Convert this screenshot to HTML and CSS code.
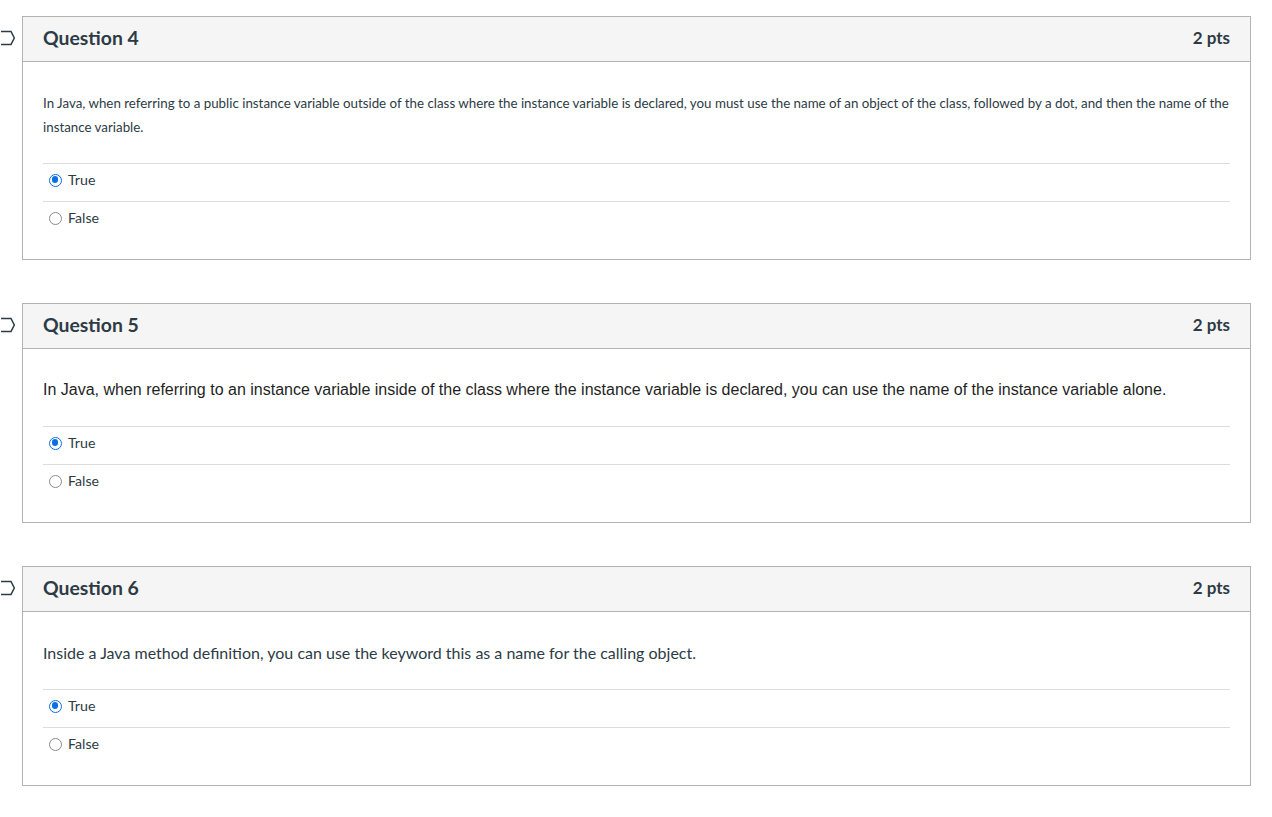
FILE: index.html
```html
<!DOCTYPE html>
<html>
<head>
<meta charset="utf-8">
<link rel="stylesheet" href="styles.css">
</head>
<body>
<div class="quiz">
  <section class="question">
    <svg class="flag" width="16" height="16" viewBox="0 0 16 16"><path d="M-3 1.5 H10 L13.3 8 L10 14.5 H-3" fill="none" stroke="#2d3b45" stroke-width="1.5" stroke-linejoin="miter"/></svg>
    <header class="q-header"><span class="q-title">Question 4</span><span class="q-pts">2 pts</span></header>
    <div class="q-body">
      <p class="q-text small">In Java, when referring to a public instance variable outside of the class where the instance variable is declared, you must use the name of an object of the class, followed by a dot, and then the name of the instance variable.</p>
      <div class="answers">
        <div class="answer"><span class="radio checked"></span><span>True</span></div>
        <div class="answer"><span class="radio"></span><span>False</span></div>
      </div>
    </div>
  </section>
  <section class="question">
    <svg class="flag" width="16" height="16" viewBox="0 0 16 16"><path d="M-3 1.5 H10 L13.3 8 L10 14.5 H-3" fill="none" stroke="#2d3b45" stroke-width="1.5" stroke-linejoin="miter"/></svg>
    <header class="q-header"><span class="q-title">Question 5</span><span class="q-pts">2 pts</span></header>
    <div class="q-body">
      <p class="q-text arial">In Java, when referring to an instance variable inside of the class where the instance variable is declared, you can use the name of the instance variable alone.</p>
      <div class="answers">
        <div class="answer"><span class="radio checked"></span><span>True</span></div>
        <div class="answer"><span class="radio"></span><span>False</span></div>
      </div>
    </div>
  </section>
  <section class="question">
    <svg class="flag" width="16" height="16" viewBox="0 0 16 16"><path d="M-3 1.5 H10 L13.3 8 L10 14.5 H-3" fill="none" stroke="#2d3b45" stroke-width="1.5" stroke-linejoin="miter"/></svg>
    <header class="q-header"><span class="q-title">Question 6</span><span class="q-pts">2 pts</span></header>
    <div class="q-body">
      <p class="q-text">Inside a Java method definition, you can use the keyword this as a name for the calling object.</p>
      <div class="answers">
        <div class="answer"><span class="radio checked"></span><span>True</span></div>
        <div class="answer"><span class="radio"></span><span>False</span></div>
      </div>
    </div>
  </section>
</div>
</body>
</html>
```
FILE: styles.css
```css
html, body {
  margin: 0;
  padding: 0;
  background: #ffffff;
}
body {
  font-family: Lato, "Open Sans", sans-serif;
  color: #2d3b45;
}
.quiz {
  display: flex;
  flex-direction: column;
  gap: 43px;
  padding: 16px 21px 0 22px;
}
.question {
  position: relative;
  border: 1px solid #b3b3b3;
}
.flag {
  position: absolute;
  left: -22px;
  top: 13px;
}
.q-header {
  display: flex;
  justify-content: space-between;
  align-items: center;
  background: #f5f5f5;
  border-bottom: 1px solid #b3b3b3;
  height: 44px;
  padding: 0 20px;
  line-height: 24px;
}
.q-title {
  font-size: 19.4px;
  font-weight: 700;
  margin-top: -3px;
}
.q-pts {
  font-size: 17px;
  font-weight: 700;
  margin-top: -3px;
}
.q-body {
  padding: 29px 20px 20px 20px;
}
.q-text {
  margin: 0 0 24px 0;
  font-size: 16px;
  line-height: 24px;
}
.q-text.small {
  font-size: 13.33px;
}
.q-text.arial {
  font-family: "Liberation Sans", Arial, sans-serif;
  color: #1f1f1f;
}
.answers {
  display: flex;
  flex-direction: column;
}
.answer {
  display: flex;
  align-items: center;
  gap: 6px;
  border-top: 1px solid #dcdcdc;
  padding: 7px 0 12px 6px;
  line-height: 18px;
  font-size: 14.2px;
}
.radio {
  width: 13px;
  height: 13px;
  border-radius: 50%;
  border: 1px solid #8a8a8a;
  box-sizing: border-box;
  flex: none;
  position: relative;
}
.radio.checked {
  border: 1.5px solid #0b6fe0;
}
.radio.checked::after {
  content: "";
  position: absolute;
  left: 1.75px;
  top: 1.75px;
  width: 6.5px;
  height: 6.5px;
  border-radius: 50%;
  background: #0b6fe0;
}
```
